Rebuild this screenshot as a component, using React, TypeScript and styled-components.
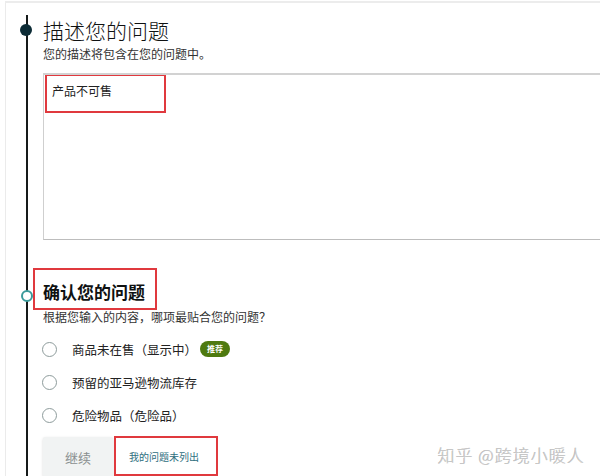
import React from 'react'
import styled, { createGlobalStyle } from 'styled-components'

const GlobalStyle = createGlobalStyle`
  html, body {
    margin: 0;
    padding: 0;
    background: #ffffff;
    overflow: hidden;
  }
  body {
    font-family: "Noto Sans CJK SC", "Noto Sans", sans-serif;
    color: #0f1111;
  }
`

const options = [
  { label: '商品未在售（显示中）', tag: '推荐' },
  { label: '预留的亚马逊物流库存' },
  { label: '危险物品（危险品）' },
]

export default function App() {
  return (
    <>
      <GlobalStyle />
      <Frame>
        <Timeline>
          <Step>
            <FilledDot />
            <Title>描述您的问题</Title>
            <Hint>您的描述将包含在您的问题中。</Hint>
            <TextBox>
              <Marked>产品不可售</Marked>
            </TextBox>
          </Step>

          <Step $gap={28}>
            <HollowDot />
            <TitleMark>
              <BoldTitle>确认您的问题</BoldTitle>
            </TitleMark>
            <Question>根据您输入的内容，哪项最贴合您的问题？</Question>
            <Options>
              {options.map((o) => (
                <Option key={o.label}>
                  <Radio />
                  <span>{o.label}</span>
                  {o.tag && <Badge>{o.tag}</Badge>}
                </Option>
              ))}
            </Options>
            <Actions>
              <ContinueButton>继续</ContinueButton>
              <LinkBox>我的问题未列出</LinkBox>
            </Actions>
          </Step>
        </Timeline>
        <Watermark>知乎 @跨境小暖人</Watermark>
      </Frame>
    </>
  )
}

const Frame = styled.div`
  position: relative;
  margin: 1px 0 0 5px;
  height: 475px;
  border-top: 2px solid #ececec;
  border-left: 1px solid #ebebeb;
  box-sizing: border-box;
`

const Timeline = styled.div`
  margin-left: 20px;
  border-left: 2px solid #161a1a;
  height: 100%;
`

const Step = styled.section<{ $gap?: number }>`
  position: relative;
  padding-left: 15px;
  margin-top: ${({ $gap }) => $gap ?? 12}px;
`

const FilledDot = styled.span`
  position: absolute;
  left: -8px;
  top: 9px;
  width: 12px;
  height: 12px;
  border-radius: 50%;
  background: #0d2c36;
`

const HollowDot = styled.span`
  position: absolute;
  left: -7px;
  top: 22px;
  width: 8px;
  height: 8px;
  border-radius: 50%;
  background: #ffffff;
  border: 2px solid #3a9a9a;
`

const Title = styled.h1`
  margin: 0;
  font-size: 21px;
  line-height: 30px;
  font-weight: 300;
  color: #0f1111;
`

const Hint = styled.p`
  margin: 0;
  font-size: 12px;
  line-height: 18px;
  color: #333;
`

const TextBox = styled.div`
  margin-top: 10px;
  height: 164px;
  border-top: 2px solid #d2d2d2;
  border-left: 1px solid #cfcfcf;
  border-bottom: 1px solid #bdbdbd;
`

const Marked = styled.div`
  margin-left: 1px;
  width: 112px;
  height: 29px;
  border: 2px solid #e0393e;
  border-top-width: 1px;
  padding: 6px 0 0 5px;
  font-size: 12px;
  line-height: 18px;
  color: #222;
`

const TitleMark = styled.div`
  margin-left: -10px;
  width: 124px;
  height: 42px;
  border: 2px solid #e0393e;
  display: flex;
  align-items: flex-end;
  padding: 0 0 5px 8px;
  box-sizing: border-box;
`

const BoldTitle = styled.h2`
  margin: 0;
  font-size: 17px;
  line-height: 22px;
  font-weight: 700;
  color: #0f1111;
`

const Question = styled.p`
  margin: 0;
  font-size: 12px;
  line-height: 14px;
  color: #333;
`

const Options = styled.ul`
  list-style: none;
  margin: 15px 0 0;
  padding: 0;
  display: flex;
  flex-direction: column;
  gap: 13px;
`

const Option = styled.li`
  display: flex;
  align-items: center;
  height: 20px;
  font-size: 12.5px;
  color: #222;
`

const Radio = styled.span`
  width: 13px;
  height: 13px;
  border-radius: 50%;
  border: 1px solid #8e9c9c;
  margin: 0 15px 0 -1px;
`

const Badge = styled.span`
  margin-left: 3px;
  padding: 0 7px;
  height: 16px;
  line-height: 16px;
  border-radius: 8px;
  background: #4e7a10;
  color: #ffffff;
  font-size: 8px;
  font-weight: 700;
`

const Actions = styled.div`
  display: flex;
  align-items: flex-start;
  margin-top: 12px;
`

const ContinueButton = styled.button`
  width: 70px;
  height: 40px;
  border: none;
  border-radius: 2px;
  background: #f1f3f3;
  box-shadow: 0 1px 3px rgba(0, 0, 0, 0.15);
  color: #8a8f8f;
  font-family: inherit;
  font-size: 13px;
`

const LinkBox = styled.div`
  margin-left: 1px;
  width: 104px;
  height: 40px;
  margin-top: -1px;
  border: 2px solid #e0393e;
  box-sizing: border-box;
  padding-left: 13px;
  display: flex;
  align-items: center;
  font-size: 10px;
  color: #2e6e7e;
`

const Watermark = styled.div`
  position: absolute;
  right: 15px;
  bottom: 9px;
  font-size: 17px;
  font-weight: 300;
  color: #c9c9c9;
  text-shadow: 1px 1px 0 #ffffff, -0.5px -0.5px 0 #b0b0b0;
  letter-spacing: 1px;
`
